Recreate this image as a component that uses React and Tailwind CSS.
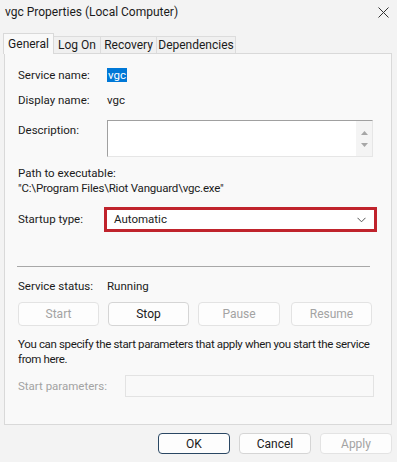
import React from 'react';

const font = { fontFamily: 'Roboto, "Liberation Sans", sans-serif' };

function Btn({ children, disabled, primary, className = '' }) {
  return (
    <div
      className={`flex items-center justify-center rounded-[4px] border text-[12px] ${
        primary ? 'border-[#2a4763] bg-[#fdfdfd]' : 'border-[#d5d5d5] bg-[#fdfdfd]'
      } ${disabled ? 'text-[#a3a3a3] border-[#e3e3e3] bg-[#f7f7f7]' : 'text-[#1b1b1b]'} ${className}`}
    >
      {children}
    </div>
  );
}

export default function App() {
  return (
    <div className="w-[397px] h-[462px] bg-[#f3f3f3] text-[#1b1b1b] overflow-hidden select-none" style={font}>
      {/* title bar */}
      <div className="h-[30px] flex items-start justify-between pt-[4px] pl-[5px] pr-[6px]">
        <span className="text-[12px] leading-[16px]">vgc Properties (Local Computer)</span>
        <svg width="11" height="11" viewBox="0 0 11 11" className="mt-[3px] mr-[2px]">
          <path d="M0.5 0.5 L10.5 10.5 M10.5 0.5 L0.5 10.5" stroke="#333" strokeWidth="1" fill="none" />
        </svg>
      </div>

      {/* tabs */}
      <div className="h-[23px] flex items-end pl-[3px] text-[12px]">
        <div className="relative z-10 h-[21px] w-[51px] mb-[-1px] flex items-center justify-center bg-[#f9f9f9] border border-b-0 border-[#d9d9d9]">
          General
        </div>
        <div className="h-[17px] w-[47px] flex items-center justify-center border-t border-r border-[#dcdcdc] bg-[#f0f0f0]">Log On</div>
        <div className="h-[17px] w-[56px] flex items-center justify-center border-t border-r border-[#dcdcdc] bg-[#f0f0f0]">Recovery</div>
        <div className="h-[17px] w-[79px] flex items-center justify-center border-t border-r border-[#dcdcdc] bg-[#f0f0f0]">Dependencies</div>
      </div>

      {/* panel */}
      <div className="ml-[4px] w-[388px] h-[372px] bg-[#f9f9f9] border border-[#d9d9d9] pl-[13px] text-[11.5px] leading-[15px]">
        <div className="mt-[13px] h-[16px] flex items-center">
          <span className="w-[89px]">Service name:</span>
          <span className="bg-[#0078d7] text-white px-[1px] leading-[14px]">vgc</span>
        </div>
        <div className="mt-[9px] h-[16px] flex items-center">
          <span className="w-[89px]">Display name:</span>
          <span>vgc</span>
        </div>
        <div className="mt-[12px] flex items-start">
          <span className="w-[89px] pt-[3px]">Description:</span>
          <div className="w-[266px] h-[37px] flex justify-end bg-white border-t border-l border-[#a0a0a0] border-r border-b border-r-[#e6e6e6] border-b-[#e6e6e6]">
            <div className="w-[16px] h-full bg-[#f4f4f4] flex flex-col items-center justify-center gap-[8px]">
              <svg width="7" height="4" viewBox="0 0 7 4"><path d="M0 4 L3.5 0 L7 4 Z" fill="#a6a6a6" /></svg>
              <svg width="7" height="4" viewBox="0 0 7 4"><path d="M0 0 L3.5 4 L7 0 Z" fill="#a6a6a6" /></svg>
            </div>
          </div>
        </div>
        <div className="mt-[9px]">Path to executable:</div>
        <div className="tracking-[-0.2px]">"C:\Program Files\Riot Vanguard\vgc.exe"</div>
        <div className="mt-[11px] flex items-center">
          <span className="w-[86px]">Startup type:</span>
          <div className="w-[273px] h-[25px] border-[3px] border-[#c0232c] bg-white flex items-center justify-between pl-[7px] pr-[8px]">
            <span>Automatic</span>
            <svg width="9" height="6" viewBox="0 0 9 6">
              <path d="M0.5 0.8 L4.5 4.8 L8.5 0.8" stroke="#555" strokeWidth="1" fill="none" />
            </svg>
          </div>
        </div>
        <div className="mt-[34px] w-[353px] h-px bg-[#a8a8a8] ml-[-1px]" />
        <div className="mt-[11px] h-[16px] flex items-center">
          <span className="w-[89px]">Service status:</span>
          <span>Running</span>
        </div>
        <div className="mt-[8px] flex">
          <Btn disabled className="w-[81px] h-[24px]">Start</Btn>
          <Btn className="w-[81px] h-[24px] ml-[9px] border-[#c9c9c9]">Stop</Btn>
          <Btn disabled className="w-[82px] h-[24px] ml-[9px]">Pause</Btn>
          <Btn disabled className="w-[81px] h-[24px] ml-[11px]">Resume</Btn>
        </div>
        <div className="mt-[11px] w-[372px] tracking-[-0.35px]">
          You can specify the start parameters that apply when you start the service
          <br />
          from here.
        </div>
        <div className="mt-[8px] flex items-center">
          <span className="w-[107px] text-[#a3a3a3]">Start parameters:</span>
          <div className="w-[249px] h-[22px] border border-[#e3e3e3] bg-[#f9f9f9]" />
        </div>
      </div>

      {/* bottom buttons */}
      <div className="mt-[8px] flex justify-end gap-[9px] pr-[5px]">
        <Btn primary className="w-[72px] h-[21px]">OK</Btn>
        <Btn className="w-[72px] h-[21px]">Cancel</Btn>
        <Btn disabled className="w-[72px] h-[21px]">Apply</Btn>
      </div>
    </div>
  );
}
